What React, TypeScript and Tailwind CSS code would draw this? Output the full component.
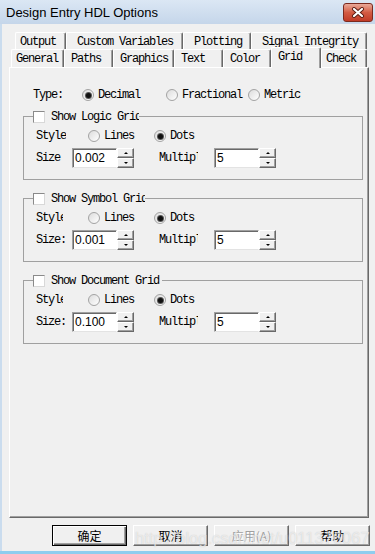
import React from "react";

const mono = "font-['Liberation_Mono',monospace] text-[12px] tracking-[-1.2px] leading-none text-black whitespace-nowrap";

function Radio({ checked, label, className }: { checked?: boolean; label: string; className?: string }) {
  return (
    <div className={`flex items-center ${className ?? ""}`}>
      <span className="w-[12px] h-[12px] rounded-full border border-[#a3a3a3] bg-gradient-to-br from-[#dcdcdc] to-white flex items-center justify-center shrink-0">
        {checked && <span className="w-[5px] h-[5px] rounded-full bg-[#111] ring-1 ring-[#555]" />}
      </span>
      <span className={`ml-[4px] ${mono}`}>{label}</span>
    </div>
  );
}

function Checkbox() {
  return (
    <span className="w-[12px] h-[12px] bg-white border border-t-[#8a8a8a] border-l-[#8a8a8a] border-r-[#d8d8d8] border-b-[#d8d8d8] shrink-0" />
  );
}

function SpinBtn({ up }: { up?: boolean }) {
  return (
    <div className="h-[10px] bg-[#f0f0f0] border border-t-white border-l-white border-r-[#696969] border-b-[#696969] shadow-[inset_-1px_-1px_0_#a0a0a0] flex items-center justify-center">
      {up ? (
        <span className="w-0 h-0 border-x-[2px] border-x-transparent border-b-[2px] border-b-black" />
      ) : (
        <span className="w-0 h-0 border-x-[2px] border-x-transparent border-t-[2px] border-t-black" />
      )}
    </div>
  );
}

function NumField({ value }: { value: string }) {
  return (
    <div className="flex">
      <div className="w-[45px] h-[20px] bg-white border border-t-[#a0a0a0] border-l-[#a0a0a0] border-r-white border-b-[#e3e3e3] shadow-[inset_1px_1px_0_#696969] flex items-center pl-[2px] text-[12px] leading-none font-['Liberation_Sans',sans-serif] text-black">
        {value}
      </div>
      <div className="w-[17px] h-[20px] flex flex-col">
        <SpinBtn up />
        <SpinBtn />
      </div>
    </div>
  );
}

function GridGroup({
  caption,
  captionW,
  styleW,
  sizeLabel,
  size,
  className,
}: {
  caption: string;
  captionW: string;
  styleW: string;
  sizeLabel: string;
  size: string;
  className?: string;
}) {
  return (
    <fieldset className={`w-[340px] border border-[#a0a0a0] pb-[11px] ${className ?? ""}`}>
      <legend className="ml-[9px] h-[13px] flex items-center bg-[#f0f0f0]">
        <Checkbox />
        <span className={`ml-[6px] overflow-hidden ${captionW} ${mono}`}>{caption}</span>
      </legend>
      <div className="pl-[12px]">
        {/* style row */}
        <div className="mt-[5px] h-[16px] flex items-center">
          <div className="w-[52px]">
            <div className={`overflow-hidden ${styleW} ${mono}`}>Style</div>
          </div>
          <Radio label="Lines" className="w-[66px]" />
          <Radio label="Dots" checked />
        </div>
        {/* size row */}
        <div className="mt-[4px] h-[20px] flex items-center">
          <div className={`w-[36px] ${mono}`}>{sizeLabel}</div>
          <NumField value={size} />
          <div className="ml-[25px] w-[55px]">
            <div className={`w-[39px] overflow-hidden ${mono}`}>Multiplier</div>
          </div>
          <NumField value="5" />
        </div>
      </div>
    </fieldset>
  );
}

function Tab({ label, className, selected }: { label: string; className: string; selected?: boolean }) {
  return (
    <div
      className={`${className} flex bg-[#f0f0f0] border-t border-l border-r border-t-white border-l-white border-r-[#696969] rounded-t-[2px] shadow-[inset_-1px_0_0_#a0a0a0] ${
        selected ? "-mt-[2px] h-[21px] relative z-10 items-center pb-[2px]" : "h-full items-center"
      } ${mono}`}
    >
      {label}
    </div>
  );
}

function DlgButton({ label, primary, disabled }: { label: string; primary?: boolean; disabled?: boolean }) {
  return (
    <div
      className={`w-[75px] h-[21px] flex items-center justify-center text-[12px] font-['Noto_Sans_CJK_SC',sans-serif] ${
        primary
          ? "border border-black shadow-[inset_1px_1px_0_#fff,inset_-1px_-1px_0_#696969,inset_-2px_-2px_0_#a0a0a0]"
          : "border border-t-white border-l-white border-r-[#696969] border-b-[#696969] shadow-[inset_-1px_-1px_0_#a0a0a0]"
      } ${disabled ? "text-[#a0a0a0] [text-shadow:1px_1px_0_#fff]" : "text-black"}`}
    >
      {label}
    </div>
  );
}

export default function App() {
  return (
    <div className="w-[375px] h-[554px] bg-[#f0f0f0] flex flex-col overflow-hidden relative">
      {/* title bar */}
      <div className="h-[24px] shrink-0 flex items-center justify-between pl-[6px] pr-[2px] bg-gradient-to-b from-[#dbe7f4] to-[#c5d6ea]">
        <span className="text-[13px] font-['Liberation_Sans',sans-serif] text-black pt-[1px]">Design Entry HDL Options</span>
        <div className="w-[30px] h-[19px] rounded-[3px] border border-[#7b2a1f] bg-gradient-to-b from-[#e9a999] via-[#d35b43] to-[#c13a26] flex items-center justify-center">
          <svg width="14" height="11" viewBox="0 0 14 11">
            <path d="M3 2 L11 9 M11 2 L3 9" stroke="#5a1c12" strokeWidth="4" strokeLinecap="round" />
            <path d="M3 2 L11 9 M11 2 L3 9" stroke="#fff" strokeWidth="2.2" strokeLinecap="round" />
          </svg>
        </div>
      </div>

      {/* body */}
      <div className="flex-1 flex flex-col border-l-2 border-l-[#cadcee]">
        {/* tabs back row */}
        <div className="mt-[8px] ml-[13px] h-[17px] flex">
          <Tab label="Output" className="w-[51px] pl-[4px] pt-[2px]" />
          <Tab label="Custom Variables" className="w-[117px] pl-[10px] pt-[2px]" />
          <Tab label="Plotting" className="w-[68px] pl-[10px] pt-[2px]" />
          <Tab label="Signal Integrity" className="w-[116px] pl-[10px] pt-[2px]" />
        </div>
        {/* tabs front row */}
        <div className="ml-[9px] h-[18px] flex">
          <Tab label="General" className="w-[53px] pl-[4px]" />
          <Tab label="Paths" className="w-[49px] pl-[6px]" />
          <Tab label="Graphics" className="w-[61px] pl-[6px]" />
          <Tab label="Text" className="w-[49px] pl-[6px]" />
          <Tab label="Color" className="w-[48px] pl-[6px]" />
          <Tab label="Grid" className="w-[50px] pl-[6px]" selected />
          <Tab label="Check" className="w-[46px] pl-[4px]" />
        </div>

        {/* panel */}
        <div className="ml-[7px] w-[360px] h-[451px] shrink-0 border border-t-white border-l-white border-r-[#696969] border-b-[#696969] shadow-[inset_-1px_-1px_0_#a0a0a0] pt-[19px] pl-[13px]">
          <div className="ml-[10px] h-[16px] flex items-center">
            <div className={`w-[49px] ${mono}`}>Type:</div>
            <Radio label="Decimal" checked className="w-[84px]" />
            <Radio label="Fractional" className="w-[82px]" />
            <Radio label="Metric" />
          </div>

          <GridGroup className="mt-[7px]" caption="Show Logic Grid" captionW="w-[88px]" styleW="w-[30px]" sizeLabel="Size" size="0.002" />
          <GridGroup className="mt-[12px]" caption="Show Symbol Grid" captionW="w-[94px]" styleW="w-[27px]" sizeLabel="Size:" size="0.001" />
          <GridGroup className="mt-[12px]" caption="Show Document Grid" captionW="w-[111px]" styleW="w-[27px]" sizeLabel="Size:" size="0.100" />
        </div>

        {/* buttons */}
        <div className="mt-[7px] pl-[50px] flex gap-[6px]">
          <DlgButton label="确定" primary />
          <DlgButton label="取消" />
          <DlgButton label="应用(A)" disabled />
          <DlgButton label="帮助" />
        </div>
      </div>

      {/* bottom frame edge */}
      <div className="h-[3px] shrink-0 bg-[#8fcdee]" />

      {/* watermark */}
      <div className="absolute left-[135px] top-[526px] text-[16.5px] font-['Liberation_Sans',sans-serif] text-white/60 [text-shadow:0_0_1px_rgba(140,140,140,0.45)] pointer-events-none whitespace-nowrap">
        http://blog.csdn.net/u011376067
      </div>
    </div>
  );
}
